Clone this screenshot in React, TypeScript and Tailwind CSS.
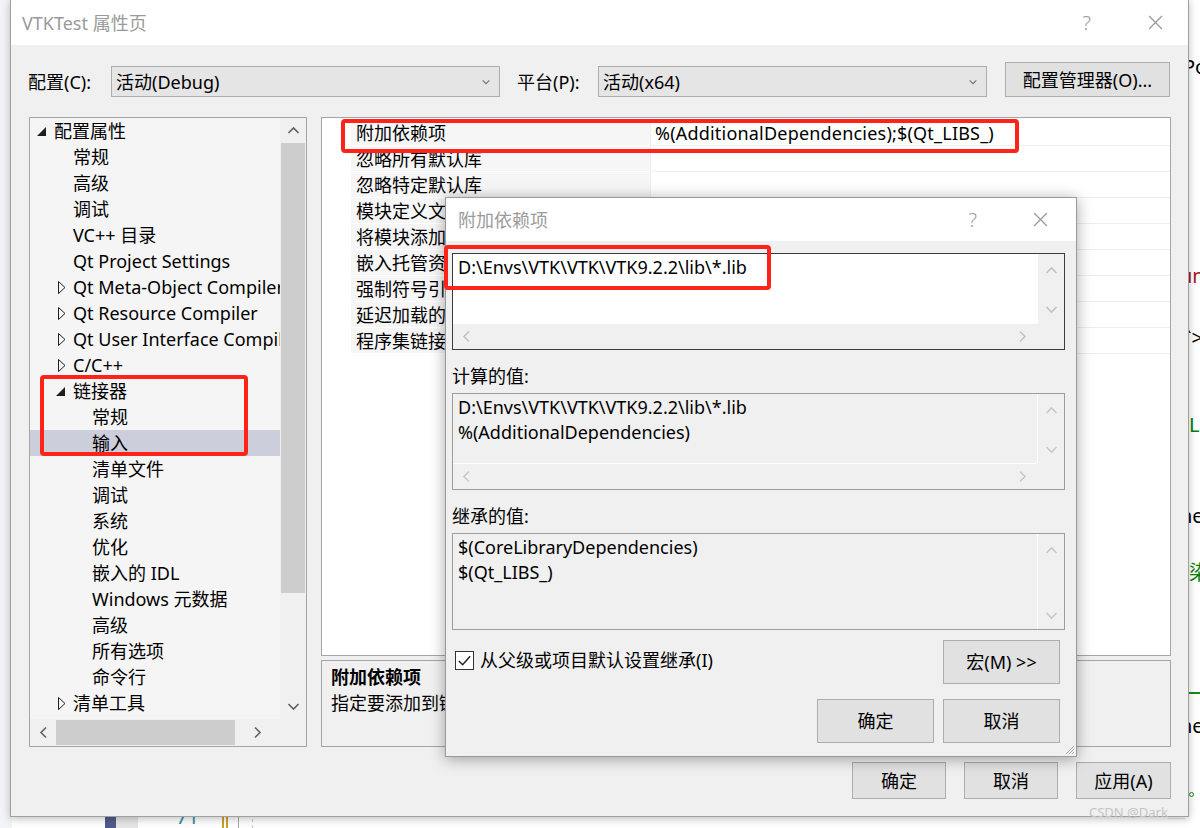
import React from "react";

type Dir = "up" | "down" | "left" | "right";

type TreeRow = { label: string; level: number; toggle?: "open" | "closed"; selected?: boolean };

const TREE: TreeRow[] = [
  { label: "配置属性", level: 0, toggle: "open" },
  { label: "常规", level: 1 },
  { label: "高级", level: 1 },
  { label: "调试", level: 1 },
  { label: "VC++ 目录", level: 1 },
  { label: "Qt Project Settings", level: 1 },
  { label: "Qt Meta-Object Compiler", level: 1, toggle: "closed" },
  { label: "Qt Resource Compiler", level: 1, toggle: "closed" },
  { label: "Qt User Interface Compiler", level: 1, toggle: "closed" },
  { label: "C/C++", level: 1, toggle: "closed" },
  { label: "链接器", level: 1, toggle: "open" },
  { label: "常规", level: 2 },
  { label: "输入", level: 2, selected: true },
  { label: "清单文件", level: 2 },
  { label: "调试", level: 2 },
  { label: "系统", level: 2 },
  { label: "优化", level: 2 },
  { label: "嵌入的 IDL", level: 2 },
  { label: "Windows 元数据", level: 2 },
  { label: "高级", level: 2 },
  { label: "所有选项", level: 2 },
  { label: "命令行", level: 2 },
  { label: "清单工具", level: 1, toggle: "closed" },
];

const PROPS = [
  "附加依赖项",
  "忽略所有默认库",
  "忽略特定默认库",
  "模块定义文件",
  "将模块添加到程序集",
  "嵌入托管资源文件",
  "强制符号引用",
  "延迟加载的 DLL",
  "程序集链接资源",
];

const PAD: Record<number, string> = { 0: "pl-[6px]", 1: "pl-[25px]", 2: "pl-[44px]" };

function Chevron({ dir, className }: { dir: Dir; className?: string }) {
  const vertical = dir === "up" || dir === "down";
  const pts = {
    up: "1,7 6,2 11,7",
    down: "1,2 6,7 11,2",
    left: "7,1 2,6 7,11",
    right: "2,1 7,6 2,11",
  }[dir];
  return (
    <svg viewBox={vertical ? "0 0 12 9" : "0 0 9 12"} className={className}>
      <polyline points={pts} fill="none" stroke="currentColor" strokeWidth="1.6" />
    </svg>
  );
}

function CloseX({ className }: { className?: string }) {
  return (
    <svg viewBox="0 0 14 14" className={className}>
      <path d="M1 1 L13 13 M13 1 L1 13" stroke="currentColor" strokeWidth="1.2" fill="none" />
    </svg>
  );
}

function Toggle({ kind }: { kind?: "open" | "closed" }) {
  if (kind === "open")
    return (
      <svg width="9" height="9" className="ml-[1px] shrink-0">
        <polygon points="9,0 9,9 0,9" fill="#1e1e1e" />
      </svg>
    );
  if (kind === "closed")
    return (
      <svg width="8" height="13" className="ml-[3px] shrink-0">
        <polygon points="0.5,0.5 7,6.5 0.5,12.5" fill="none" stroke="#1e1e1e" strokeWidth="1" />
      </svg>
    );
  return null;
}

function Combo({ value }: { value: string }) {
  return (
    <div className="flex h-[31px] w-[389px] items-center justify-between border border-[#adadad] bg-[#e5e5e5] pl-[4px] pr-[8px]">
      <span>{value}</span>
      <Chevron dir="down" className="h-[6px] w-[10px] text-[#707070]" />
    </div>
  );
}

function Button({ label, className }: { label: string; className: string }) {
  return (
    <div className={`flex items-center justify-center border border-[#adadad] bg-[#e1e1e1] ${className}`}>
      {label}
    </div>
  );
}

function Tree() {
  return (
    <div className="ml-[1px] grid h-[630px] w-[278px] grid-cols-[1fr_26px] grid-rows-[1fr_27px] border border-[#a5a5a5]">
      <div className="overflow-hidden bg-[#f5f5f5]">
        {TREE.map((r, i) => (
          <div
            key={i}
            className={`flex h-[26px] items-center whitespace-nowrap ${PAD[r.level]} ${r.selected ? "bg-[#cccedb]" : ""}`}
          >
            <div className="flex w-[18px] shrink-0 items-center">
              <Toggle kind={r.toggle} />
            </div>
            <span>{r.label}</span>
          </div>
        ))}
      </div>
      <div className="flex flex-col bg-[#f0f0f0]">
        <div className="flex h-[25px] items-center justify-center">
          <Chevron dir="up" className="h-[9px] w-[13px] text-[#606060]" />
        </div>
        <div className="mx-[1px] h-[450px] bg-[#cdcdcd]" />
        <div className="flex flex-1 items-end justify-center pb-[8px]">
          <Chevron dir="down" className="h-[9px] w-[13px] text-[#606060]" />
        </div>
      </div>
      <div className="flex items-center bg-[#f0f0f0]">
        <div className="flex w-[26px] justify-center">
          <Chevron dir="left" className="h-[13px] w-[9px] text-[#606060]" />
        </div>
        <div className="h-[25px] w-[179px] bg-[#cdcdcd]" />
        <div className="flex flex-1 justify-center">
          <Chevron dir="right" className="h-[13px] w-[9px] text-[#606060]" />
        </div>
      </div>
      <div className="bg-[#f0f0f0]" />
    </div>
  );
}

function PropertyGrid() {
  return (
    <div className="h-[539px] border border-[#a5a5a5] bg-white pt-[2px]">
      {PROPS.map((p, i) => (
        <div key={p} className="flex h-[26px]">
          <div className="w-[29px]" />
          <div className="flex w-[299px] items-center border-b border-white bg-[#f6f6f7] pl-[5px]">
            <span className="whitespace-nowrap">{p}</span>
          </div>
          <div className="flex flex-1 items-center border-b border-l border-[#eeeeee] pl-[4px] tracking-[0.2px]">
            {i === 0 ? "%(AdditionalDependencies);$(Qt_LIBS_)" : ""}
          </div>
        </div>
      ))}
    </div>
  );
}

function EditBox({
  lines,
  active,
  hscroll,
}: {
  lines: string[];
  active?: boolean;
  hscroll?: boolean;
}) {
  const tone = active ? "text-[#c2c2c2]" : "text-[#c8c8c8]";
  return (
    <div
      className={`grid h-[97px] w-[613px] grid-cols-[1fr_27px] border ${
        hscroll ? "grid-rows-[1fr_26px]" : "grid-rows-[1fr]"
      } ${active ? "border-[#3c3c3c]" : "border-[#9c9c9c]"}`}
    >
      <div className={`pl-[5px] pt-[1px] leading-[25px] ${active ? "bg-white" : "bg-[#f0f0f0]"}`}>
        {lines.map((l) => (
          <div key={l}>{l}</div>
        ))}
      </div>
      <div className="flex flex-col items-center justify-between border-l border-white bg-[#f0f0f0] pb-[9px] pt-[12px]">
        <Chevron dir="up" className={`h-[9px] w-[13px] ${tone}`} />
        <Chevron dir="down" className={`h-[9px] w-[13px] ${tone}`} />
      </div>
      {hscroll && (
        <>
          <div className="flex items-center justify-between border-t border-white bg-[#f0f0f0] pl-[9px] pr-[10px]">
            <Chevron dir="left" className={`h-[13px] w-[9px] ${tone}`} />
            <Chevron dir="right" className={`h-[13px] w-[9px] ${tone}`} />
          </div>
          <div className="bg-[#f0f0f0]" />
        </>
      )}
    </div>
  );
}

function SubDialog() {
  return (
    <div className="absolute left-[445px] top-[197px] z-20 flex h-[560px] w-[632px] flex-col border border-[#9a9a9a] bg-[#f0f0f0] shadow-[0_2px_14px_rgba(0,0,0,0.35)]">
      <div className="flex h-[43px] items-center justify-between bg-white pl-[12px] pr-[28px]">
        <span className="text-[#9b9b9b]">附加依赖项</span>
        <div className="flex items-center gap-[56px] text-[#9b9b9b]">
          <span className="text-[20px] font-light">?</span>
          <CloseX className="h-[15px] w-[15px]" />
        </div>
      </div>
      <div className="relative flex flex-1 flex-col pl-[6px] pr-[11px] pt-[12px]">
        <EditBox lines={["D:\\Envs\\VTK\\VTK\\VTK9.2.2\\lib\\*.lib"]} active hscroll />
        <div className="mt-[14px] h-[24px] leading-[24px]">计算的值:</div>
        <div className="mt-[5px]">
          <EditBox
            lines={["D:\\Envs\\VTK\\VTK\\VTK9.2.2\\lib\\*.lib", "%(AdditionalDependencies)"]}
            hscroll
          />
        </div>
        <div className="mt-[14px] h-[24px] leading-[24px]">继承的值:</div>
        <div className="mt-[5px]">
          <EditBox lines={["$(CoreLibraryDependencies)", "$(Qt_LIBS_)"]} />
        </div>
        <div className="mt-[10px] flex items-start justify-between pr-[5px]">
          <div className="ml-[3px] mt-[7px] flex items-center gap-[6px]">
            <div className="flex h-[19px] w-[19px] items-center justify-center border border-[#333333] bg-white">
              <svg viewBox="0 0 16 16" className="h-[15px] w-[15px]">
                <polyline points="2,8.5 6,12.5 14,3.5" fill="none" stroke="#222" strokeWidth="1.6" />
              </svg>
            </div>
            <span>从父级或项目默认设置继承(I)</span>
          </div>
          <Button label="宏(M) >>" className="h-[44px] w-[117px]" />
        </div>
        <div className="mt-[15px] flex justify-end gap-[9px] pr-[5px]">
          <Button label="确定" className="h-[44px] w-[117px]" />
          <Button label="取消" className="h-[44px] w-[117px]" />
        </div>
        <svg viewBox="0 0 12 12" className="absolute bottom-[1px] right-[1px] h-[12px] w-[12px]">
          <path d="M11 3 L3 11 M11 6 L6 11 M11 9 L9 11" stroke="#a8a8a8" strokeWidth="1" />
        </svg>
      </div>
    </div>
  );
}

function EditorBits() {
  return (
    <div className="whitespace-nowrap text-[20px]">
      <div className="absolute left-0 top-0 h-full w-[12px] bg-[#f3f4f8]" />
      <span className="absolute left-[1183px] top-[54px] text-black">Po</span>
      <span className="absolute left-[1180px] top-[263px] text-[#a31515]">um</span>
      <span className="absolute left-[1186px] top-[325px] text-black">`&gt;</span>
      <span className="absolute left-[1189px] top-[412px] text-[#008000]">L</span>
      <span className="absolute left-[1180px] top-[503px] text-black">ner</span>
      <span className="absolute left-[1169px] top-[560px] text-[#008000]">渲染</span>
      <div className="absolute left-[1188px] top-[692px] h-[2px] w-[12px] bg-[#1a8a1a]" />
      <span className="absolute left-[1180px] top-[713px] text-black">ner</span>
      <div className="absolute left-[1189px] top-[792px] h-[5px] w-[5px] rounded-full border border-[#1a8a1a]" />
      <div className="absolute left-[105px] top-[817px] h-[11px] w-[11px] bg-[#4f5d8c]" />
      <div className="absolute left-[116px] top-[817px] h-[11px] w-[22px] bg-[#e6e6e6]" />
      <span className="absolute left-[176px] top-[805px] leading-[24px] text-[#2b91af]">71</span>
      <div className="absolute left-[222px] top-[817px] h-[11px] w-[2px] bg-[#c9a227]" />
      <div className="absolute left-[226px] top-[817px] h-[11px] w-[2px] bg-[#c9a227]" />
      <div className="absolute left-[238px] top-[817px] h-[11px] w-[1px] bg-[#a8a8a8]" />
      <div className="absolute left-[252px] top-[819px] h-[9px] w-[1px] border-l border-dashed border-[#c8c8c8]" />
    </div>
  );
}

export default function App() {
  return (
    <div className="relative h-[828px] w-[1200px] overflow-hidden bg-white font-['Noto_Sans','Noto_Sans_CJK_SC',sans-serif] text-[18px] leading-[26px] text-black">
      <EditorBits />

      <div className="absolute left-[10px] top-[-1px] z-10 flex h-[818px] w-[1179px] flex-col border border-[#a0a0a0] bg-[#f0f0f0] shadow-[0_2px_8px_rgba(0,0,0,0.25)]">
        <div className="flex h-[45px] items-center justify-between bg-white pl-[11px] pr-[25px]">
          <span className="text-[#9a9a9a]">VTKTest 属性页</span>
          <div className="flex items-center gap-[57px] text-[#9a9a9a]">
            <span className="text-[20px] font-light">?</span>
            <CloseX className="h-[15px] w-[15px]" />
          </div>
        </div>

        <div className="flex flex-1 flex-col pl-[17px] pr-[17px] pt-[17px]">
          <div className="flex h-[35px] items-end">
            <div className="flex h-[31px] w-[83px] items-center">配置(C):</div>
            <Combo value="活动(Debug)" />
            <div className="ml-[17px] flex h-[31px] w-[81px] items-center">平台(P):</div>
            <Combo value="活动(x64)" />
            <Button label="配置管理器(O)..." className="ml-[18px] h-[35px] w-[165px]" />
          </div>

          <div className="mt-[20px] flex gap-[14px]">
            <Tree />
            <div className="flex flex-1 flex-col gap-[4px]">
              <PropertyGrid />
              <div className="h-[87px] border border-[#a5a5a5] pl-[9px] pt-[3px]">
                <div className="font-bold">附加依赖项</div>
                <div>指定要添加到链接命令行的附加项。</div>
              </div>
            </div>
          </div>

          <div className="mt-[15px] flex justify-end gap-[18px]">
            <Button label="确定" className="h-[37px] w-[94px]" />
            <Button label="取消" className="h-[37px] w-[94px]" />
            <Button label="应用(A)" className="h-[37px] w-[95px]" />
          </div>
        </div>
      </div>

      <SubDialog />

      {/* annotation boxes */}
      <div className="absolute left-[40px] top-[375px] z-30 h-[81px] w-[208px] rounded-[4px] border-4 border-[#ff2318]" />
      <div className="absolute left-[341px] top-[119px] z-30 h-[34px] w-[678px] rounded-[4px] border-4 border-[#ff2318]" />
      <div className="absolute left-[444px] top-[245px] z-30 h-[45px] w-[327px] rounded-[4px] border-4 border-[#ff2318]" />

      <span className="absolute left-[1089px] top-[803px] z-30 whitespace-nowrap text-[13px] leading-[18px] text-[#c4c4c4]">
        CSDN @Dark___
      </span>
    </div>
  );
}
